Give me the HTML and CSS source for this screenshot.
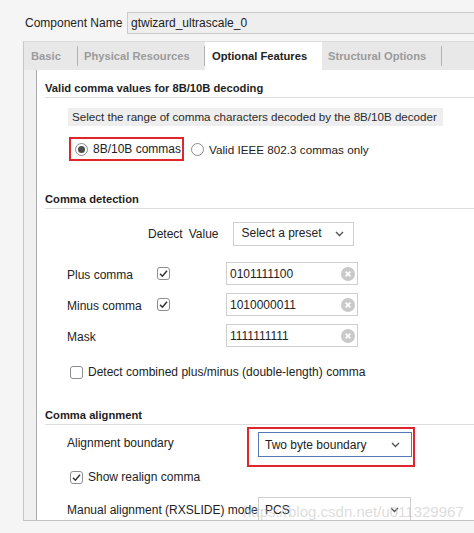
FILE: index.html
```html
<!DOCTYPE html>
<html>
<head>
<meta charset="utf-8">
<link rel="stylesheet" href="styles.css">
</head>
<body>
<div class="top">
  <span class="cn-label">Component Name</span>
  <div class="cn-input">gtwizard_ultrascale_0</div>
</div>
<div class="panel">
  <div class="tabs">
    <div class="tab tab-basic">Basic</div>
    <div class="tab tab-phys">Physical Resources</div>
    <div class="tab tab-opt active">Optional Features</div>
    <div class="tab tab-struct">Structural Options</div>
  </div>
  <div class="panel-body">
    <div class="gutter"></div>
    <div class="content">
      <div class="sec-title first">Valid comma values for 8B/10B decoding</div>
      <div class="hint">Select the range of comma characters decoded by the 8B/10B decoder</div>
      <div class="radio-row">
        <div class="hl-radio">
          <span class="radio on"></span><span class="radio-text">8B/10B commas</span>
        </div>
        <span class="radio second"></span><span class="radio-text">Valid IEEE 802.3 commas only</span>
      </div>

      <div class="sec-title sec-detect">Comma detection</div>
      <div class="detect-row">
        <span class="detect-lbl">Detect</span><span class="value-lbl">Value</span>
        <div class="select preset"><span>Select a preset</span>
          <svg class="caret" width="9" height="6" viewBox="0 0 9 6"><polyline points="1,1 4.5,4.5 8,1" fill="none" stroke="#555" stroke-width="1.4"/></svg>
        </div>
      </div>
      <div class="fields">
        <div class="field">
          <span class="field-label">Plus comma</span>
          <span class="check"><svg width="13" height="13" viewBox="0 0 13 13"><polyline points="3,6.8 5.4,9.2 10,3.8" fill="none" stroke="#333" stroke-width="1.5"/></svg></span>
          <div class="input"><span>0101111100</span><svg class="clear" width="14" height="14" viewBox="0 0 14 14"><circle cx="7" cy="7" r="7" fill="#c9c9c9"/><path d="M4.6 4.6 L9.4 9.4 M9.4 4.6 L4.6 9.4" stroke="#fff" stroke-width="1.7"/></svg></div>
        </div>
        <div class="field">
          <span class="field-label">Minus comma</span>
          <span class="check"><svg width="13" height="13" viewBox="0 0 13 13"><polyline points="3,6.8 5.4,9.2 10,3.8" fill="none" stroke="#333" stroke-width="1.5"/></svg></span>
          <div class="input"><span>1010000011</span><svg class="clear" width="14" height="14" viewBox="0 0 14 14"><circle cx="7" cy="7" r="7" fill="#c9c9c9"/><path d="M4.6 4.6 L9.4 9.4 M9.4 4.6 L4.6 9.4" stroke="#fff" stroke-width="1.7"/></svg></div>
        </div>
        <div class="field">
          <span class="field-label">Mask</span>
          <span></span>
          <div class="input"><span>1111111111</span><svg class="clear" width="14" height="14" viewBox="0 0 14 14"><circle cx="7" cy="7" r="7" fill="#c9c9c9"/><path d="M4.6 4.6 L9.4 9.4 M9.4 4.6 L4.6 9.4" stroke="#fff" stroke-width="1.7"/></svg></div>
        </div>
      </div>
      <div class="check-row combined">
        <span class="check"></span><span class="check-text">Detect combined plus/minus (double-length) comma</span>
      </div>

      <div class="sec-title sec-align">Comma alignment</div>
      <div class="align-row">
        <span class="align-label">Alignment boundary</span>
        <div class="hl-select">
          <div class="select focused"><span>Two byte boundary</span>
            <svg class="caret" width="9" height="6" viewBox="0 0 9 6"><polyline points="1,1 4.5,4.5 8,1" fill="none" stroke="#555" stroke-width="1.4"/></svg>
          </div>
        </div>
      </div>
      <div class="check-row realign">
        <span class="check"><svg width="13" height="13" viewBox="0 0 13 13"><polyline points="3,6.8 5.4,9.2 10,3.8" fill="none" stroke="#333" stroke-width="1.5"/></svg></span><span class="check-text">Show realign comma</span>
      </div>
      <div class="manual-row">
        <span class="manual-label">Manual alignment (RXSLIDE) mode</span>
        <div class="select pcs"><span>PCS</span>
          <svg class="caret" width="9" height="6" viewBox="0 0 9 6"><polyline points="1,1 4.5,4.5 8,1" fill="none" stroke="#555" stroke-width="1.4"/></svg>
        </div>
      </div>
    </div>
  </div>
</div>
<div class="watermark">https://blog.csdn.net/u011329967</div>
</body>
</html>
```

FILE: styles.css
```css
html, body {
  margin: 0;
  padding: 0;
}
body {
  position: relative;
  width: 474px;
  height: 533px;
  overflow: hidden;
  background: #f5f5f5;
  font-family: "Liberation Sans", Arial, sans-serif;
  font-size: 12px;
  color: #222;
}

.top {
  display: flex;
  align-items: center;
  padding: 12px 0 0 25px;
  height: 22px;
}
.cn-label {
  width: 102px;
  flex: none;
}
.cn-input {
  flex: 1;
  height: 22px;
  box-sizing: border-box;
  border: 1px solid #cacaca;
  border-right: none;
  background: #eeeeee;
  padding-left: 3px;
  line-height: 20px;
}

.panel {
  margin: 7px 0 0 23px;
  border-left: 1px solid #c8c8c8;
  border-top: 1px solid #dcdcdc;
  border-bottom: 1px solid #c4c4c4;
}

.tabs {
  display: flex;
  height: 28px;
  background: #e8e8e8;
}
.tab {
  position: relative;
  box-sizing: border-box;
  font-weight: bold;
  font-size: 11.2px;
  line-height: 28px;
  color: #9b9b9b;
  white-space: nowrap;
}
.tab::after {
  content: "";
  position: absolute;
  right: 0;
  top: 4px;
  bottom: 4px;
  width: 1px;
  background: #b3b3b3;
}
.tab-basic { width: 54px; padding-left: 7px; }
.tab-phys { width: 127px; padding-left: 6px; }
.tab-opt { width: 117px; padding-left: 7px; }
.tab-struct { width: 120px; padding-left: 6px; }
.tab.active {
  background: #ffffff;
  color: #222;
}
.tab.active::after { display: none; }

.panel-body {
  display: flex;
  height: 450px;
  overflow: hidden;
}
.gutter {
  width: 12px;
  flex: none;
  background: #f0f0f0;
  border-right: 1px solid #a9a9a9;
}
.content {
  flex: 1;
  background: #ffffff;
  padding-left: 8px;
  overflow: hidden;
}

.sec-title {
  font-weight: bold;
  font-size: 11.2px;
  line-height: 16px;
  padding-bottom: 1px;
  border-bottom: 1px solid #dddddd;
  color: #1e1e1e;
}
.sec-title.first { margin-top: 10px; }
.sec-detect { margin-top: 30px; }
.sec-align { margin-top: 27px; }

.hint {
  margin: 10px 0 0 23px;
  width: 375px;
  height: 18px;
  line-height: 18px;
  background: #eeeeee;
  padding-left: 4px;
  box-sizing: border-box;
  color: #2a2a2a;
  font-size: 11.6px;
  white-space: nowrap;
}

.radio-row {
  display: flex;
  align-items: center;
  margin-top: 11px;
  height: 24px;
}
.hl-radio {
  display: flex;
  align-items: center;
  box-sizing: border-box;
  height: 24px;
  margin-left: 24px;
  padding: 0 1px 0 4px;
  border: 2px solid #e2252b;
}
.radio {
  width: 13px;
  height: 13px;
  box-sizing: border-box;
  border: 1px solid #8c8c8c;
  border-radius: 50%;
  background: #ffffff;
  display: flex;
  align-items: center;
  justify-content: center;
  flex: none;
}
.radio.on::after {
  content: "";
  width: 7px;
  height: 7px;
  border-radius: 50%;
  background: #4d4d4d;
}
.radio.second { margin-left: 7px; }
.radio-text { margin-left: 5px; white-space: nowrap; }
.radio.second + .radio-text { font-size: 11.7px; }

.detect-row {
  display: flex;
  align-items: center;
  margin-top: 13px;
  height: 24px;
  padding-left: 103px;
}
.detect-lbl { margin-right: 6px; }
.value-lbl { margin-right: 14px; }

.select {
  display: flex;
  align-items: center;
  justify-content: space-between;
  box-sizing: border-box;
  background: #ffffff;
  border: 1px solid #cfcfcf;
  white-space: nowrap;
}
.select.preset {
  width: 121px;
  height: 24px;
  padding: 0 9px 3px 8px;
}
.select.preset .caret { margin-top: 3px; }
.select.focused {
  width: 154px;
  height: 25px;
  border-color: #5678b8;
  padding: 0 11px 0 6px;
}
.select.pcs {
  width: 153px;
  height: 25px;
  padding: 0 11px 0 6px;
}

.fields {
  display: flex;
  flex-direction: column;
  gap: 8px;
  margin-top: 16px;
  margin-left: 22px;
}
.field {
  display: grid;
  grid-template-columns: 90px 69px 132px;
  align-items: center;
  height: 23px;
}
.field-label { margin-top: 3px; }

.check {
  width: 13px;
  height: 13px;
  box-sizing: border-box;
  border: 1px solid #8e8e8e;
  border-radius: 3px;
  background: #ffffff;
  display: block;
  position: relative;
  flex: none;
}
.check svg {
  position: absolute;
  left: -1px;
  top: -1px;
}

.input {
  display: flex;
  align-items: center;
  justify-content: space-between;
  box-sizing: border-box;
  height: 23px;
  border: 1px solid #cfcfcf;
  padding: 0 2px 0 3px;
  background: #fff;
}

.check-row {
  display: flex;
  align-items: center;
  height: 16px;
  margin-left: 25px;
}
.check-row.combined { margin-top: 17px; }
.check-row.realign { margin-top: 2px; }
.check-text { margin-left: 5px; white-space: nowrap; }

.align-row {
  display: flex;
  align-items: flex-start;
  margin-top: 2px;
  margin-left: 22px;
}
.align-label {
  width: 180px;
  flex: none;
  margin-top: 8px;
  line-height: 16px;
}
.hl-select {
  border: 2px solid #e2252b;
  padding: 3px 1px 8px 9px;
}

.manual-row {
  display: flex;
  align-items: center;
  margin-top: 12px;
  margin-left: 22px;
}
.manual-label {
  width: 191px;
  flex: none;
  white-space: nowrap;
}

.watermark {
  position: absolute;
  left: 243px;
  top: 503px;
  font-size: 15px;
  color: rgba(185, 185, 185, 0.5);
  white-space: nowrap;
}
```
